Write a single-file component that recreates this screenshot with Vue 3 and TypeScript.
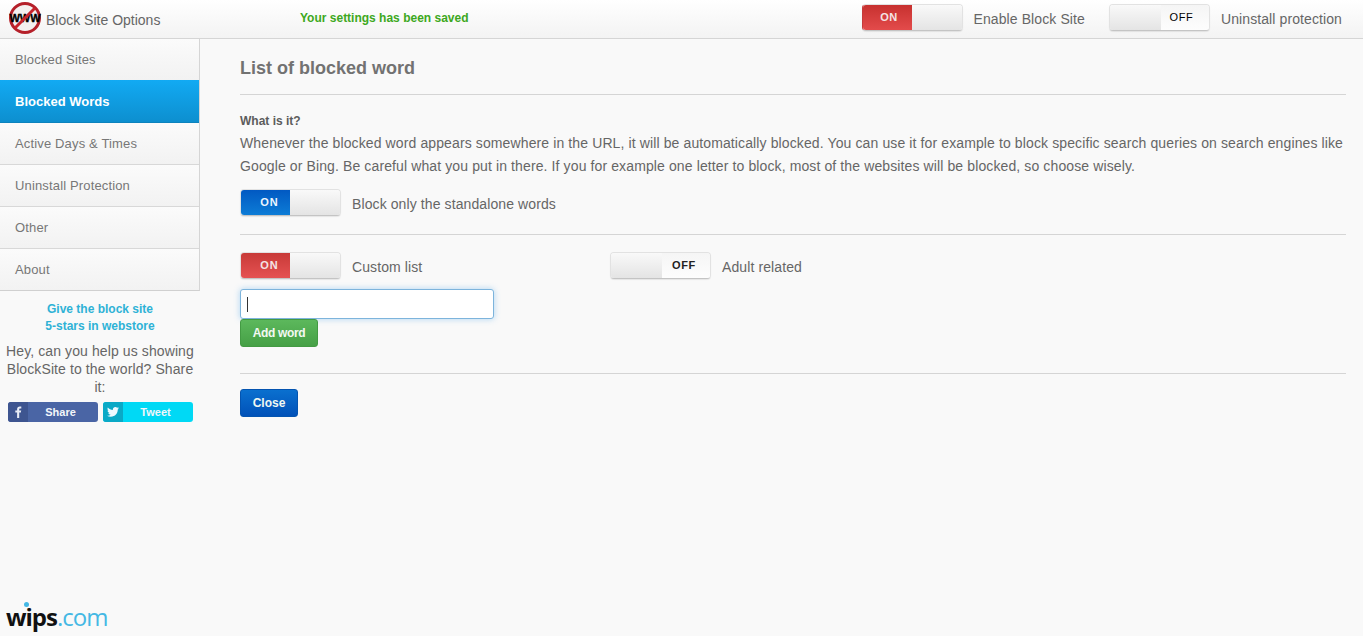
<script setup lang="ts">
const navItems = [
  { label: 'Blocked Sites', active: false },
  { label: 'Blocked Words', active: true },
  { label: 'Active Days & Times', active: false },
  { label: 'Uninstall Protection', active: false },
  { label: 'Other', active: false },
  { label: 'About', active: false },
]
</script>

<template>
  <div class="page">
    <header class="topbar">
      <div class="brand">
        <svg class="logo" width="34" height="34" viewBox="0 0 34 34">
          <circle cx="17" cy="17" r="14.5" fill="#f4f1f0" stroke="#b5202a" stroke-width="3" />
          <text x="17" y="21" text-anchor="middle" font-family="Liberation Sans, sans-serif" font-size="11" font-weight="700" fill="#000" stroke="#000" stroke-width="0.4">WWW</text>
          <line x1="7" y1="27" x2="27" y2="7" stroke="#c8242c" stroke-width="3" />
        </svg>
        <span class="brand-name">Block Site Options</span>
      </div>
      <div class="saved">Your settings has been saved</div>
      <div class="top-controls">
        <div class="control">
          <div class="toggle on red"><span class="lit">ON</span><span class="knob"></span></div>
          <span class="toggle-label">Enable Block Site</span>
        </div>
        <div class="control">
          <div class="toggle off thin"><span class="knob"></span><span class="dark">OFF</span></div>
          <span class="toggle-label">Uninstall protection</span>
        </div>
      </div>
    </header>

    <div class="body">
      <aside class="sidebar">
        <nav class="nav">
          <a v-for="item in navItems" :key="item.label" class="nav-item" :class="{ active: item.active }">{{ item.label }}</a>
        </nav>
        <div class="rate">Give the block site<br />5-stars in webstore</div>
        <p class="share-text">Hey, can you help us showing BlockSite to the world? Share it:</p>
        <div class="share-row">
          <a class="share fb">
            <span class="share-icon">
              <svg width="8" height="12" viewBox="0 0 8 12"><path d="M5.2 12V6.6h1.7l.3-2H5.2V3.4c0-.6.2-1 1-1h1.1V.6C7 .5 6.500 .5 5.800 .5 4.200 .5 3.100 1.400 3.100 3.200v1.400H1.300v2h1.800V12z" fill="#e8ecf5" /></svg>
            </span>
            <span class="share-text-label">Share</span>
          </a>
          <a class="share tw">
            <span class="share-icon">
              <svg width="12" height="10" viewBox="0 0 24 20"><path d="M24 2.400c-.9.400-1.800.7-2.800.8 1-.6 1.800-1.600 2.200-2.700-1 .6-2 1-3.100 1.200C19.300.6 18 0 16.600 0c-2.700 0-4.900 2.200-4.900 4.900 0 .4 0 .8.100 1.100C7.700 5.800 4.100 3.900 1.700.9c-.4.700-.7 1.600-.7 2.500 0 1.700.9 3.200 2.200 4.100-.8 0-1.600-.2-2.200-.6v.1c0 2.400 1.700 4.400 3.900 4.800-.4.100-.8.200-1.300.2-.3 0-.6 0-.9-.1.600 2 2.400 3.400 4.600 3.400-1.700 1.300-3.800 2.100-6.100 2.100-.4 0-.8 0-1.200-.1 2.200 1.400 4.800 2.200 7.500 2.200 9.100 0 14-7.500 14-14v-.6c1-.7 1.800-1.600 2.500-2.500z" fill="#eefaff" /></svg>
            </span>
            <span class="share-text-label">Tweet</span>
          </a>
        </div>
        <div class="wips"><span class="wips-dark">wips<i class="wips-dot"></i></span><span class="wips-light">.com</span></div>
      </aside>

      <main class="main">
        <h1 class="title">List of blocked word</h1>
        <hr class="rule" />
        <h2 class="what">What is it?</h2>
        <p class="desc">Whenever the blocked word appears somewhere in the URL, it will be automatically blocked. You can use it for example to block specific search queries on search engines like Google or Bing. Be careful what you put in there. If you for example one letter to block, most of the websites will be blocked, so choose wisely.</p>
        <div class="control">
          <div class="toggle on blue wide"><span class="lit">ON</span><span class="knob"></span></div>
          <span class="toggle-label">Block only the standalone words</span>
        </div>
        <hr class="rule rule-mid" />
        <div class="lists">
          <div class="control list-col">
            <div class="toggle on red2 wide"><span class="lit">ON</span><span class="knob"></span></div>
            <span class="toggle-label">Custom list</span>
          </div>
          <div class="control">
            <div class="toggle off"><span class="knob"></span><span class="dark">OFF</span></div>
            <span class="toggle-label">Adult related</span>
          </div>
        </div>
        <div class="word-input"><span class="caret"></span></div>
        <button class="btn green">Add word</button>
        <hr class="rule rule-low" />
        <button class="btn blue-btn">Close</button>
      </main>
    </div>
  </div>
</template>

<style>
html, body { margin: 0; background: #f9f9f9; }
</style>

<style scoped>
.page {
  height: 636px;
  overflow: hidden;
  display: flex;
  flex-direction: column;
  background: #f9f9f9;
  font-family: "Liberation Sans", Arial, sans-serif;
  color: #666;
}
.topbar {
  height: 38px;
  flex: none;
  display: flex;
  align-items: flex-start;
  border-bottom: 1px solid #d5d5d5;
  background: linear-gradient(#ffffff, #f3f3f3);
}
.brand { width: 300px; flex: none; display: flex; align-items: center; height: 36px; }
.logo { margin-left: 8px; margin-right: 4px; flex: none; }
.brand-name { font-size: 14px; color: #666; margin-top: 4px; }
.saved { font-size: 12px; font-weight: 700; color: #3da821; line-height: 14px; margin-top: 11px; }
.top-controls { margin-left: auto; display: flex; gap: 24px; padding-top: 4px; padding-right: 21px; }
.control { display: flex; align-items: center; height: 27px; }
.toggle {
  box-sizing: border-box;
  width: 101px;
  height: 27px;
  flex: none;
  display: flex;
  border: 1px solid #e2e2e2;
  border-bottom-color: #c4c4c4;
  border-radius: 4px;
  overflow: hidden;
  font-size: 11px;
  font-weight: 700;
  letter-spacing: 0.6px;
  box-shadow: 0 1px 1px rgba(0,0,0,.08);
}
.toggle span { display: flex; align-items: center; justify-content: center; padding-bottom: 2px; box-sizing: border-box; }
.lit { width: 49px; color: #f4e4e4; padding-left: 4px; }
.knob { flex: 1; background: linear-gradient(#f9f9f9, #e4e4e4); }
.dark { flex: 1; color: #222; background: linear-gradient(#f5f5f5, #fdfdfd); padding-right: 4px; }
.toggle.off .knob { flex: none; width: 51px; }
.thin { font-weight: 400; }
.thin .dark { color: #000; padding-right: 7px; }
.wide { letter-spacing: 1px; }
.wide .lit { padding-left: 8px; }
.red { border-color: #c63a3a; border-right-color: #e2e2e2; border-top-color: #e2e2e2; border-bottom-color: #c4c4c4; }
.red .lit { background: linear-gradient(#c7312f, #e34b4b); }
.red2 .lit { background: linear-gradient(#c83a38, #e55252); }
.blue .lit { background: linear-gradient(#0159c2, #0d7cd6); color: #eef6ff; }
.toggle-label { margin-left: 11px; font-size: 14px; letter-spacing: 0.1px; color: #666; white-space: nowrap; padding-top: 3px; }
.body { flex: 1; display: flex; min-height: 0; }
.sidebar {
  width: 200px;
  flex: none;
  display: flex;
  flex-direction: column;
  align-items: stretch;
}
.nav { display: flex; flex-direction: column; border-right: 1px solid #d5d5d5; border-bottom: 1px solid #d0d0d0; }
.nav-item {
  height: 41px;
  line-height: 42px;
  padding-left: 15px;
  font-size: 13px;
  letter-spacing: 0.15px;
  color: #777;
  background: linear-gradient(#fbfbfb, #f2f2f2);
  border-bottom: 1px solid #d8d8d8;
}
.nav-item:last-child { border-bottom: none; }
.nav-item.active {
  color: #fff;
  font-weight: 700;
  letter-spacing: 0;
  background: linear-gradient(#12aaf3, #0d8fcf);
  border-bottom-color: #0d83bd;
  margin-top: -1px;
  height: 42px;
  line-height: 43px;
}
.rate {
  text-align: center;
  font-size: 12px;
  font-weight: 700;
  line-height: 17px;
  color: #2eb2d6;
  margin-top: 10px;
}
.share-text {
  margin: 7px 0 0;
  padding: 0 3px;
  text-align: center;
  font-size: 14px;
  letter-spacing: 0.1px;
  line-height: 18px;
  color: #666;
}
.share-row { display: flex; gap: 5px; padding-left: 8px; margin-top: 6px; }
.share {
  width: 90px;
  height: 20px;
  display: flex;
  border-radius: 3px;
  overflow: hidden;
  color: #f2f6fa;
  font-size: 11px;
  font-weight: 700;
  line-height: 20px;
}
.share-icon { width: 20px; display: flex; align-items: center; justify-content: center; flex: none; }
.share-text-label { flex: 1; text-align: center; padding-right: 5px; }
.fb { background: #4a65a5; }
.fb .share-icon { background: #3e5590; }
.tw { background: #00d9f5; }
.tw .share-icon { background: #0aa9c6; }
.wips {
  margin-top: auto;
  padding-left: 6px;
  height: 34px;
  font-family: "Open Sans", sans-serif;
  font-size: 24px;
  line-height: 30px;
  letter-spacing: -1px;
  white-space: nowrap;
}
.wips-dark { position: relative; font-weight: 700; color: #111; }
.wips-dot {
  position: absolute;
  left: 18px;
  top: 2px;
  width: 5px;
  height: 5px;
  border-radius: 50%;
  background: #45b8e4;
}
.wips-light { color: #45b8e4; }
.main { flex: 1; padding: 0 17px 0 40px; min-width: 0; }
.title { margin: 18px 0 0; font-size: 18px; font-weight: 700; line-height: 22px; color: #727272; }
.rule { border: none; border-top: 1px solid #d5d5d5; margin: 15px 0 0; }
.what { margin: 19px 0 0; font-size: 12px; font-weight: 700; line-height: 14px; color: #5c5c5c; }
.desc { margin: 4px 0 0; font-size: 14px; letter-spacing: 0.115px; line-height: 23px; color: #666; }
.desc + .control { margin-top: 11px; }
.rule-mid { margin-top: 18px; }
.lists { display: flex; margin-top: 17px; }
.list-col { width: 370px; }
.word-input {
  box-sizing: border-box;
  width: 254px;
  height: 30px;
  margin-top: 10px;
  background: #fff;
  border: 1px solid #7db4dc;
  border-radius: 3px;
  box-shadow: 0 0 6px rgba(82,168,236,.45);
  display: flex;
  align-items: center;
  padding-left: 6px;
}
.caret { width: 1px; height: 15px; background: #333; }
.btn {
  display: block;
  height: 28px;
  padding: 0;
  border-radius: 3px;
  font-family: inherit;
  font-size: 12px;
  font-weight: 700;
  color: #f2f8f2;
}
.green { width: 78px; background: linear-gradient(#5cb85c, #46a046); border: 1px solid #439a43; letter-spacing: -0.35px; }
.rule-low { margin-top: 26px; }
.blue-btn { width: 58px; margin-top: 15px; background: linear-gradient(#0a70cf, #0151b8); border: 1px solid #0454b0; }
</style>
